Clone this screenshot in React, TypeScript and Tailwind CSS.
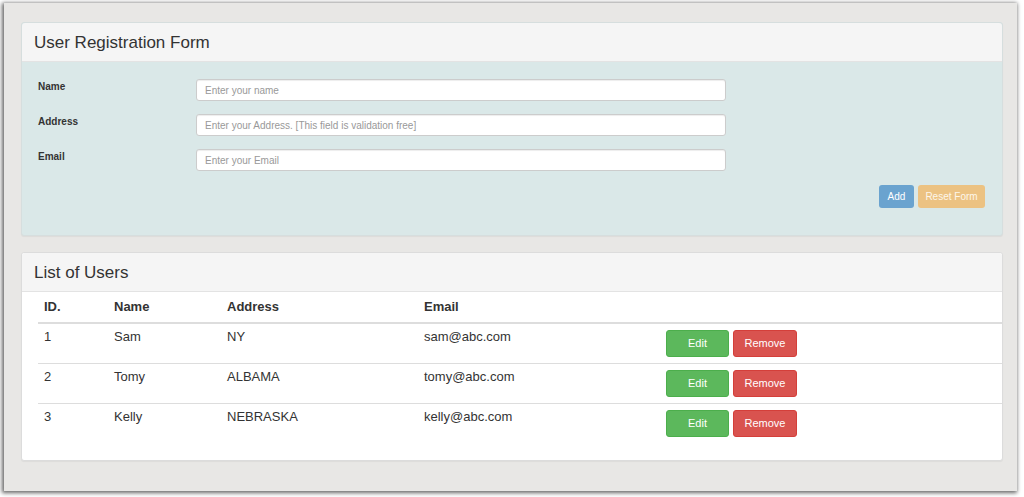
const users = [
  { id: 1, name: 'Sam', address: 'NY', email: 'sam@abc.com' },
  { id: 2, name: 'Tomy', address: 'ALBAMA', email: 'tomy@abc.com' },
  { id: 3, name: 'Kelly', address: 'NEBRASKA', email: 'kelly@abc.com' },
];

const fields = [
  { label: 'Name', placeholder: 'Enter your name' },
  { label: 'Address', placeholder: 'Enter your Address. [This field is validation free]' },
  { label: 'Email', placeholder: 'Enter your Email' },
];

export default function App() {
  return (
    <div className="w-[1024px] h-[497px] bg-white pt-[3px] pl-[4px] overflow-hidden font-['Liberation_Sans',Arial,sans-serif] text-[#333]">
      <div className="w-[1013px] h-[488px] bg-[#e8e7e5] shadow-[-1px_1px_4px_1px_rgba(0,0,0,0.6)] pl-[17px] pt-[19px]">
        {/* Registration form */}
        <div className="w-[982px] bg-[#dae8e8] rounded-[3px] border border-[#d6dede] shadow-[0_1px_1px_rgba(0,0,0,0.05)]">
          <div className="h-[39px] bg-[#f5f5f5] border-b border-[#e3e3e3] rounded-t-[3px] flex items-center px-[12px]">
            <h2 className="text-[17px] leading-none">User Registration Form</h2>
          </div>
          <div className="pt-[17px] pb-[27px] pl-[16px] pr-[17px]">
            <div className="flex flex-col gap-[13px]">
              {fields.map((f) => (
                <div key={f.label} className="flex">
                  <label className="w-[158px] text-[10px] font-bold">{f.label}</label>
                  <input
                    className="w-[530px] h-[22px] bg-white border border-[#ccc] rounded-[3px] px-[8px] text-[10px] placeholder:text-[#999] outline-none shadow-[inset_0_1px_1px_rgba(0,0,0,0.075)]"
                    placeholder={f.placeholder}
                  />
                </div>
              ))}
            </div>
            <div className="flex justify-end gap-[4px] mt-[14px]">
              <button className="w-[35px] h-[23px] rounded-[3px] bg-[#6aa3cf] text-white text-[10px]">Add</button>
              <button className="w-[67px] h-[23px] rounded-[3px] bg-[#ecc282] text-[#fdf6ea] text-[10px]">Reset Form</button>
            </div>
          </div>
        </div>

        {/* Users list */}
        <div className="w-[982px] mt-[16px] bg-white rounded-[3px] border border-[#dcdcdc] shadow-[0_1px_1px_rgba(0,0,0,0.05)]">
          <div className="h-[39px] bg-[#f5f5f5] border-b border-[#e3e3e3] rounded-t-[3px] flex items-center px-[12px]">
            <h2 className="text-[17px] leading-none">List of Users</h2>
          </div>
          <div className="pl-[16px] pb-[17px]">
            <table className="w-full border-collapse text-[13px]">
              <thead>
                <tr className="border-b-2 border-[#ddd] h-[31px]">
                  <th className="w-[70px] text-left font-bold px-[6px]">ID.</th>
                  <th className="w-[113px] text-left font-bold px-[6px]">Name</th>
                  <th className="w-[197px] text-left font-bold px-[6px]">Address</th>
                  <th className="w-[242px] text-left font-bold px-[6px]">Email</th>
                  <th></th>
                </tr>
              </thead>
              <tbody>
                {users.map((u, i) => (
                  <tr key={u.id} className={`h-[40px] ${i > 0 ? 'border-t border-[#ddd]' : ''}`}>
                    <td className="px-[6px] align-top pt-[5px] leading-[16px]">{u.id}</td>
                    <td className="px-[6px] align-top pt-[5px] leading-[16px]">{u.name}</td>
                    <td className="px-[6px] align-top pt-[5px] leading-[16px]">{u.address}</td>
                    <td className="px-[6px] align-top pt-[5px] leading-[16px]">{u.email}</td>
                    <td className="px-[6px] align-top pt-[6px]">
                      <div className="flex gap-[4px]">
                        <button className="w-[63px] h-[27px] rounded-[3px] bg-[#5cb85c] border border-[#4cae4c] text-white text-[11px]">Edit</button>
                        <button className="w-[64px] h-[27px] rounded-[3px] bg-[#d9534f] border border-[#d43f3a] text-white text-[11px]">Remove</button>
                      </div>
                    </td>
                  </tr>
                ))}
              </tbody>
            </table>
          </div>
        </div>
      </div>
    </div>
  );
}
